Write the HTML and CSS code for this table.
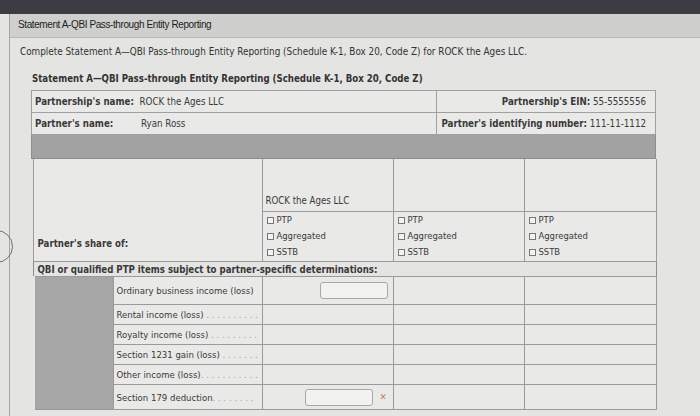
FILE: index.html
```html
<!DOCTYPE html>
<html>
<head>
<meta charset="utf-8">
<link rel="stylesheet" href="styles.css">
</head>
<body>
<div class="topbar"></div>
<div class="panel">
  <div class="panel-title">Statement A-QBI Pass-through Entity Reporting</div>
  <div class="panel-intro">Complete Statement A—QBI Pass-through Entity Reporting (Schedule K-1, Box 20, Code Z) for ROCK the Ages LLC.</div>
  <div class="content">
    <h2 class="form-heading">Statement A—QBI Pass-through Entity Reporting (Schedule K-1, Box 20, Code Z)</h2>
    <table class="info">
      <tr>
        <td class="info-left"><b>Partnership's name:</b>&nbsp; ROCK the Ages LLC</td>
        <td class="info-right"><b>Partnership's EIN:</b> 55-5555556</td>
      </tr>
      <tr>
        <td class="info-left"><b class="lbl">Partner's name:</b>Ryan Ross</td>
        <td class="info-right"><b>Partner's identifying number:</b> 111-11-1112</td>
      </tr>
      <tr><td colspan="2" class="graybar"></td></tr>
    </table>
    <table class="main">
      <colgroup>
        <col class="c1"><col class="c2"><col class="c3"><col class="c4"><col class="c5">
      </colgroup>
      <tr class="r-name">
        <td colspan="2" rowspan="2" class="share"><b>Partner's share of:</b></td>
        <td class="entity">ROCK the Ages LLC</td>
        <td></td>
        <td></td>
      </tr>
      <tr class="r-checks">
        <td class="checks">
          <div class="chk"><span class="box"></span>PTP</div>
          <div class="chk"><span class="box"></span>Aggregated</div>
          <div class="chk"><span class="box"></span>SSTB</div>
        </td>
        <td class="checks">
          <div class="chk"><span class="box"></span>PTP</div>
          <div class="chk"><span class="box"></span>Aggregated</div>
          <div class="chk"><span class="box"></span>SSTB</div>
        </td>
        <td class="checks">
          <div class="chk"><span class="box"></span>PTP</div>
          <div class="chk"><span class="box"></span>Aggregated</div>
          <div class="chk"><span class="box"></span>SSTB</div>
        </td>
      </tr>
      <tr class="r-qbi">
        <td colspan="5" class="qbi"><b>QBI or qualified PTP items subject to partner-specific determinations:</b></td>
      </tr>
      <tr class="r-item first">
        <td rowspan="6" class="grayblock"></td>
        <td class="label">Ordinary business income (loss)</td>
        <td class="val"><span class="inp"></span></td>
        <td></td>
        <td></td>
      </tr>
      <tr class="r-item">
        <td class="label">Rental income (loss)<span class="dots"> . . . . . . . . . .</span></td>
        <td></td><td></td><td></td>
      </tr>
      <tr class="r-item">
        <td class="label">Royalty income (loss)<span class="dots"> . . . . . . . . .</span></td>
        <td></td><td></td><td></td>
      </tr>
      <tr class="r-item">
        <td class="label">Section 1231 gain (loss)<span class="dots"> . . . . . . .</span></td>
        <td></td><td></td><td></td>
      </tr>
      <tr class="r-item">
        <td class="label">Other income (loss)<span class="dots">. . . . . . . . . . .</span></td>
        <td></td><td></td><td></td>
      </tr>
      <tr class="r-item last">
        <td class="label">Section 179 deduction<span class="dots">. . . . . . . .</span></td>
        <td class="val val-x"><span class="inp"></span><span class="xmark">✕</span></td>
        <td></td><td></td>
      </tr>
    </table>
  </div>
</div>
<div class="circle"></div>
</body>
</html>
```
FILE: styles.css
```css
html, body {
  margin: 0;
  padding: 0;
}
body {
  width: 700px;
  height: 416px;
  overflow: hidden;
  background: #e4e4e2;
  font-family: "DejaVu Sans", Verdana, sans-serif;
  font-stretch: condensed;
  color: #3a3a3a;
  position: relative;
}
.topbar {
  height: 14px;
  background: #3d3c45;
}
.panel {
  margin-left: 9px;
  border-left: 1px solid #a5a5a5;
  height: 402px;
}
.panel-title {
  height: 23px;
  line-height: 22px;
  background: #cfcfcd;
  border-bottom: 1px solid #b9b9b9;
  padding-left: 8px;
  font-family: "Liberation Sans", Arial, sans-serif;
  font-size: 10px;
  letter-spacing: -0.4px;
  color: #1e1e1e;
}
.panel-intro {
  padding: 8px 0 0 10px;
  height: 18px;
  font-size: 9.85px;
  color: #333;
}
.content {
  padding-left: 21px;
}
.form-heading {
  margin: 9px 0 6px 1px;
  font-size: 9.6px;
  font-weight: bold;
  color: #333;
}
table {
  border-collapse: collapse;
  font-size: 9.6px;
}
.info {
  width: 625px;
  border: 1px solid #8c8c8c;
}
.info td {
  height: 21px;
  padding: 0 3px;
  border: 1px solid #a0a0a0;
  background: #e9e9e7;
  white-space: nowrap;
  font-size: 9.7px;
}
.info-left {
  width: 398px;
}
.info-right {
  text-align: right;
  padding-right: 9px !important;
}
.lbl {
  display: inline-block;
  width: 106px;
}
.info td.graybar {
  height: 23px;
  background: #a2a2a2;
  border-color: #8c8c8c;
}
.main {
  width: 624px;
  table-layout: fixed;
  border-left: 1px solid #8c8c8c;
  border-right: 1px solid #8c8c8c;
}
.c1 { width: 80px; }
.c2 { width: 149px; }
.c3 { width: 131px; }
.c4 { width: 131px; }
.c5 { width: 132px; }
.main td {
  border: 1px solid #9a9a9a;
  padding: 0 3px;
  background: #e9e9e7;
}
.r-name td {
  height: 47px;
  vertical-align: bottom;
  border-top: none;
}
.share {
  vertical-align: bottom !important;
  padding: 0 4px 12px !important;
}
.entity {
  padding-bottom: 5px !important;
}
.r-checks td {
  height: 49px;
}
.checks {
  vertical-align: top;
  padding-top: 0 !important;
}
.chk {
  height: 16px;
  line-height: 16px;
  display: flex;
  align-items: center;
  gap: 3px;
  font-size: 9.4px;
}
.box {
  width: 5px;
  height: 5px;
  border: 1px solid #777;
  background: #f3f3f3;
  margin-left: 1px;
}
.r-qbi td {
  height: 14px;
  border-left: none;
  border-right: none;
  padding: 0 4px;
  background: #e4e4e2;
}
.r-item td {
  height: 19px;
  white-space: nowrap;
  overflow: hidden;
}
.r-item.first td {
  height: 27px;
}
.r-item.last td {
  height: 24px;
}
.main td.grayblock {
  background: #a6a6a6;
  border-left: 4px solid #e4e4e2;
  border-color: #9a9a9a;
  border-left-color: #e4e4e2;
}
.label {
  font-size: 9.5px;
}
.dots {
  color: #97a1b3;
}
.val {
  text-align: right;
  padding-right: 5px !important;
}
.inp {
  display: inline-block;
  width: 66px;
  height: 15px;
  border: 1px solid #a8a8a8;
  border-radius: 3px;
  background: #f2f2f0;
  vertical-align: middle;
}
.val-x {
  padding-right: 6px !important;
}
.xmark {
  display: inline-block;
  margin-left: 7px;
  color: #d46a6a;
  font-size: 9px;
  vertical-align: middle;
}
.circle {
  position: absolute;
  left: -20px;
  top: 230px;
  width: 31px;
  height: 31px;
  border: 1.5px solid #6d6d6d;
  border-radius: 50%;
}
```
